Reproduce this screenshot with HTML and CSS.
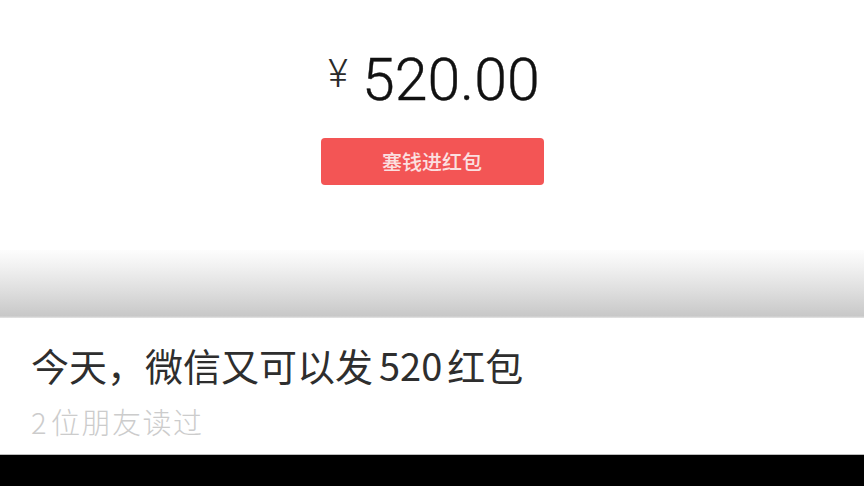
FILE: index.html
```html
<!DOCTYPE html>
<html lang="zh">
<head>
<meta charset="utf-8">
<link rel="stylesheet" href="styles.css">
</head>
<body>
<div class="page">
  <section class="top">
    <div class="amount">
      <span class="yen">¥</span>
      <span class="value">520.00</span>
    </div>
    <div class="btn">塞钱进红包</div>
  </section>
  <div class="shade"></div>
  <section class="article">
    <div class="title">今天，微信又可以发<span class="num">520</span>红包</div>
    <div class="reads"><span class="cnt">2</span>位朋友读过</div>
  </section>
  <div class="footer"></div>
</div>
</body>
</html>
```
FILE: styles.css
```css
html, body {
  margin: 0;
  padding: 0;
  background: #000;
}
.page {
  width: 864px;
  height: 486px;
  display: flex;
  flex-direction: column;
  overflow: hidden;
}
.top {
  height: 250px;
  background: #fff;
  display: flex;
  flex-direction: column;
  align-items: center;
  box-sizing: border-box;
  padding-top: 50px;
}
.amount {
  display: flex;
  align-items: flex-start;
  gap: 14px;
  margin-left: 4px;
}
.yen {
  font-family: Roboto, "Liberation Sans", sans-serif;
  font-weight: 300;
  font-size: 38px;
  line-height: 38px;
  margin-top: 5px;
  color: #2a2a2a;
}
.value {
  font-family: Roboto, "Liberation Sans", sans-serif;
  font-weight: 300;
  font-size: 59px;
  line-height: 59px;
  color: #111;
  -webkit-text-stroke: 0.4px #111;
}
.btn {
  margin-top: 29px;
  width: 223px;
  height: 47px;
  border-radius: 4px;
  background: #f35555;
  color: #fbe0e0;
  font-family: "Noto Sans CJK SC", sans-serif;
  font-weight: 500;
  font-size: 20px;
  display: flex;
  align-items: center;
  justify-content: center;
}
.shade {
  height: 68px;
  background: linear-gradient(to bottom, #fdfdfd 0%, #f1f1f1 25%, #dedede 60%, #c8c8c8 97%, #e6e6e6 100%);
}
.article {
  height: 137px;
  background: #fff;
  box-sizing: border-box;
  padding: 28px 0 0 31px;
  font-family: "Noto Sans CJK SC", sans-serif;
  border-bottom: 1px solid #bdbdbd;
}
.title {
  font-size: 38px;
  line-height: 38px;
  color: #2e2e2e;
}
.num {
  margin: 0 5px 0 6px;
}
.reads {
  margin-top: 23px;
  font-size: 29px;
  line-height: 29px;
  letter-spacing: 1.5px;
  color: #cccccc;
  font-weight: 300;
}
.cnt {
  margin-right: 3px;
}
.footer {
  flex: 1;
  background: #000;
}
```
